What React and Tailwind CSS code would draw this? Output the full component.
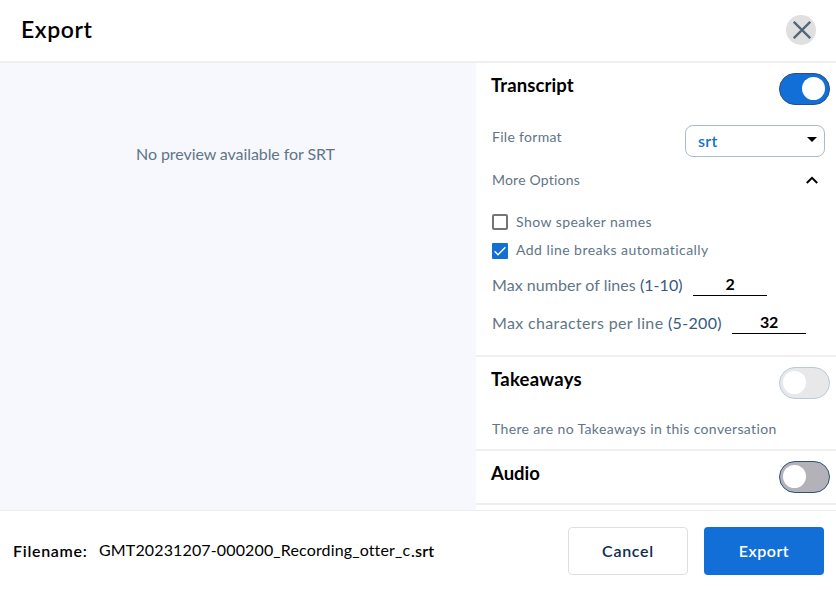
import { useState } from 'react';

function Toggle({ checked, disabled, onChange, label }) {
  const getTrackClass = () => {
    if (disabled) return 'bg-[#e8e8ea] border-[#b9cbdb]';
    if (checked) return 'bg-[#136fd8] border-[#2d4f75]';
    return 'bg-[#b3b2b9] border-[#2f5478]';
  };

  return (
    <button
      role="switch"
      aria-checked={checked}
      aria-label={label}
      disabled={disabled}
      onClick={() => onChange(!checked)}
      className={`flex h-8 w-[51px] shrink-0 items-center rounded-full border pr-1 pb-px pl-[3px] ${getTrackClass()} ${checked ? 'justify-end' : 'justify-start'}`}
    >
      <span className="h-[23px] w-[23px] rounded-full bg-white"></span>
    </button>
  );
}

function SectionHeader({ title, className, ...toggle }) {
  return (
    <div className="flex items-start justify-between pr-1.5">
      <h3 className={`-ml-px text-[18.5px] leading-6 font-bold text-black ${className}`}>{title}</h3>
      <Toggle label={title} {...toggle} />
    </div>
  );
}

function Checkbox({ checked, onChange, label, className }) {
  return (
    <button
      role="checkbox"
      aria-checked={checked}
      onClick={() => onChange(!checked)}
      className="flex h-5 items-center gap-2"
    >
      {checked ? (
        <svg viewBox="0 0 16 16" className="mt-0.5 h-4 w-4">
          <rect width="16" height="16" rx="1" fill="#136fd8" />
          <path d="M2.6 8.3 6 11.7 13.4 4.3" fill="none" stroke="#fff" strokeWidth="1.4" />
        </svg>
      ) : (
        <span className="h-4 w-4 rounded-[2px] border-2 border-[#757575]"></span>
      )}
      <span className={`text-[14px] leading-5 ${className}`}>{label}</span>
    </button>
  );
}

function NumberField({ label, range, value, onChange, className }) {
  return (
    <label className="flex h-6 items-start">
      <span className={`text-[16px] leading-6 whitespace-nowrap ${className}`}>
        {label} <span className="text-[#355a80]">{range}</span>
      </span>
      <input
        value={value}
        onChange={(e) => onChange(e.target.value)}
        className="-mt-px ml-auto h-6 w-[74px] border-b border-black text-center text-[16px] font-bold tracking-[-0.3px] text-black outline-none"
      />
    </label>
  );
}

export default function App() {
  const [transcript, setTranscript] = useState(true);
  const [audio, setAudio] = useState(false);
  const [showOptions, setShowOptions] = useState(true);
  const [speakerNames, setSpeakerNames] = useState(false);
  const [lineBreaks, setLineBreaks] = useState(true);
  const [maxLines, setMaxLines] = useState('2');
  const [maxChars, setMaxChars] = useState('32');

  return (
    <div className="flex h-[590px] w-[836px] flex-col overflow-hidden bg-white font-['Lato',sans-serif] text-[#5f7588]">
      {/* Header */}
      <header className="flex h-[63px] shrink-0 items-center justify-between border-b-2 border-[#efefef] pr-5 pl-[21px]">
        <h2 className="mb-[3px] text-[23px] leading-7 font-semibold tracking-[0.6px] text-black">Export</h2>
        <button aria-label="Close" className="mb-px flex h-[30px] w-[30px] items-center justify-center rounded-full bg-[#e0e0e0]">
          <svg viewBox="0 0 18 18" className="ml-px h-[18px] w-[18px]" stroke="#546777" strokeWidth="2.3">
            <path d="M.8.8 17.2 17.2M17.2.8.8 17.2" />
          </svg>
        </button>
      </header>

      <main className="flex h-[447px] shrink-0">
        {/* Preview */}
        <div className="w-[476px] bg-[#f7f8fd] pt-[79px] pr-[5px] text-center">
          <p className="text-[16px] leading-6 tracking-[-0.08px]">No preview available for SRT</p>
        </div>

        {/* Options */}
        <div className="w-[360px] overflow-hidden">
          <section className="h-[294px] border-b-2 border-[#efefef] pt-2.5 pl-4">
            <SectionHeader title="Transcript" className="tracking-[0.1px]" checked={transcript} onChange={setTranscript} />

            <div className="mt-5 flex items-start justify-between pr-[11px]">
              <span className="mt-0.5 text-[14px] leading-5 tracking-[0.3px]">File format</span>
              <button className="flex h-8 w-[140px] items-center justify-between rounded-lg border border-[#a9bccd] pr-[7px] pl-3">
                <span className="text-[16px] font-semibold tracking-[0.3px] text-[#136fd8]">srt</span>
                <svg viewBox="0 0 10 5" className="mb-1 h-[5px] w-2.5">
                  <path d="M0 0h10L5 5z" fill="#000" />
                </svg>
              </button>
            </div>

            <button
              onClick={() => setShowOptions(!showOptions)}
              className="mt-[13px] flex h-5 w-full items-center justify-between pr-[18px]"
            >
              <span className="text-[14px] leading-5 tracking-[0.2px]">More Options</span>
              <svg viewBox="0 0 12 8" className="h-2 w-3" fill="none" stroke="#000" strokeWidth="2">
                <path d="M.8 7 6 1.8 11.2 7" />
              </svg>
            </button>

            {showOptions && (
              <>
                <div className="mt-[22px] flex flex-col items-start gap-2">
                  <Checkbox label="Show speaker names" className="tracking-[0.45px]" checked={speakerNames} onChange={setSpeakerNames} />
                  <Checkbox label="Add line breaks automatically" className="tracking-[0.45px]" checked={lineBreaks} onChange={setLineBreaks} />
                </div>
                <div className="mt-[13px] flex flex-col gap-3.5">
                  <div className="w-[275px]">
                    <NumberField label="Max number of lines" range="(1-10)" className="tracking-[0.05px]" value={maxLines} onChange={setMaxLines} />
                  </div>
                  <div className="w-[314px]">
                    <NumberField label="Max characters per line" range="(5-200)" className="tracking-[0.35px]" value={maxChars} onChange={setMaxChars} />
                  </div>
                </div>
              </>
            )}
          </section>

          <section className="h-[94px] border-b-2 border-[#efefef] pt-2.5 pl-4">
            <SectionHeader title="Takeaways" className="tracking-[0.25px]" checked={false} disabled />
            <p className="mt-5 text-[14px] leading-5 tracking-[0.36px]">There are no Takeaways in this conversation</p>
          </section>

          <section className="h-[54px] border-b-2 border-[#efefef] pt-2.5 pl-4">
            <SectionHeader title="Audio" className="tracking-[0px]" checked={audio} onChange={setAudio} />
          </section>
        </div>
      </main>

      {/* Footer */}
      <footer className="flex h-20 items-start border-t border-[#ededf0] pt-4 pr-3 pl-[13px]">
        <div className="flex h-12 flex-1 items-center text-[16px] text-black">
          <span className="w-[86px] pb-px font-semibold tracking-[0.7px]">Filename:</span>
          <span className="w-[312px] overflow-hidden pb-0.5 tracking-[0.14px] whitespace-nowrap">GMT20231207-000200_Recording_otter_c</span>
          <span className="pb-px font-semibold tracking-[0.2px]">.srt</span>
        </div>
        <div className="flex gap-4 text-[16px] font-semibold">
          <button className="h-12 w-[120px] rounded border border-[#dedfe1] tracking-[0.7px] text-[#0b2c52]">Cancel</button>
          <button className="h-12 w-[120px] rounded bg-[#136fd8] tracking-[0.5px] text-white">Export</button>
        </div>
      </footer>
    </div>
  );
}
